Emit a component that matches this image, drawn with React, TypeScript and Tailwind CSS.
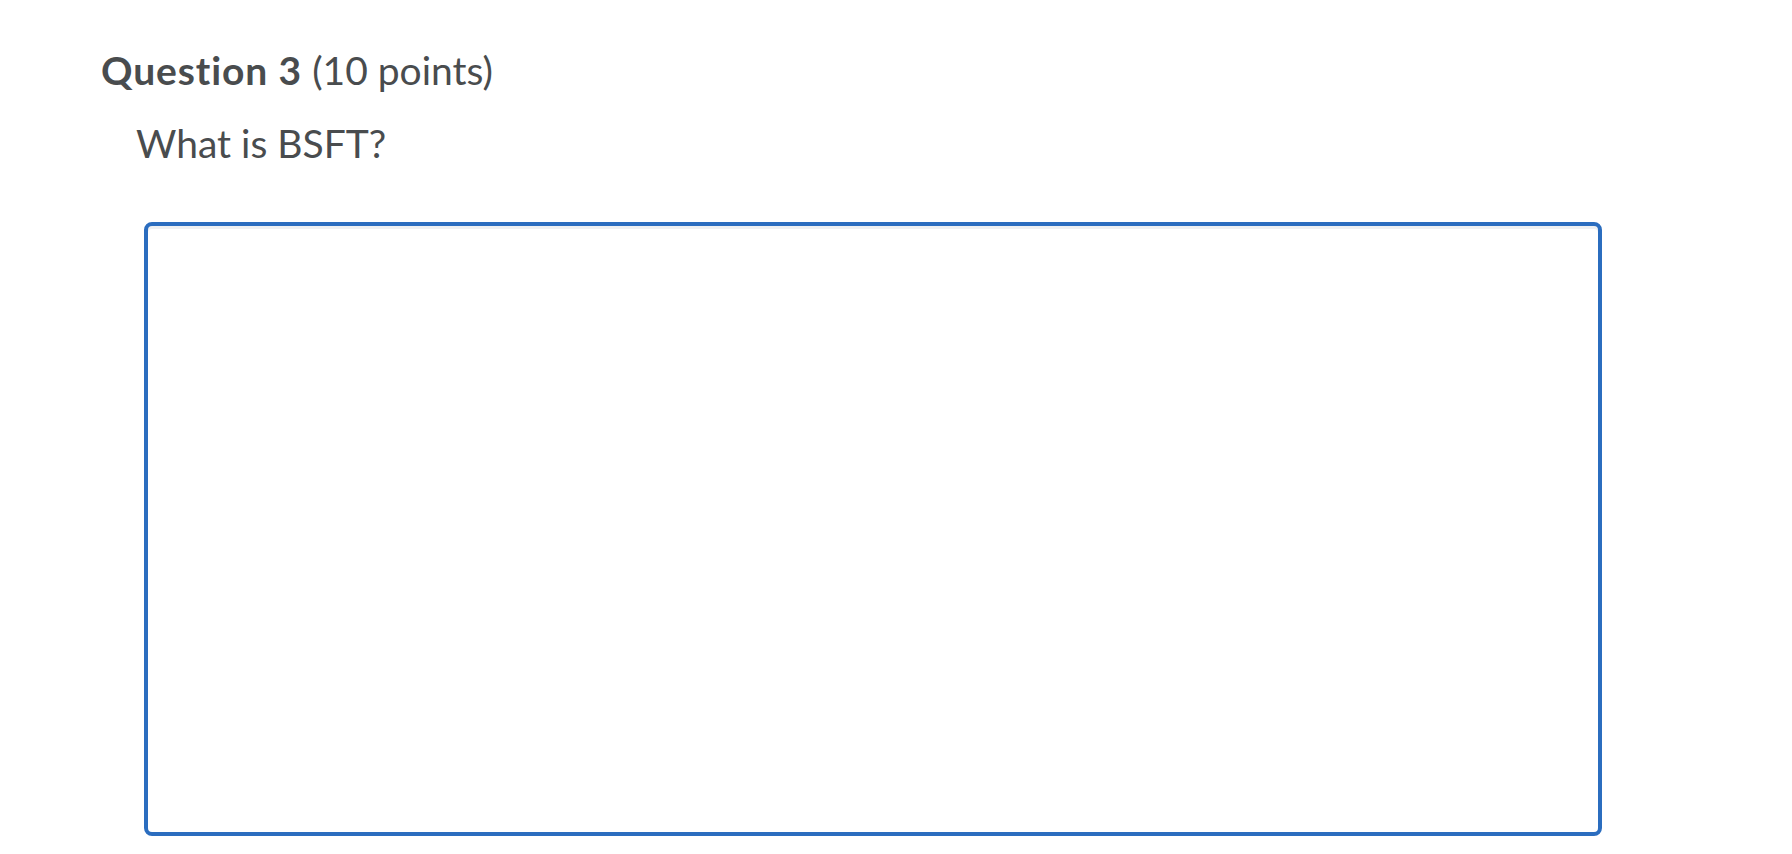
import React from "react";

export default function App() {
  return (
    <div className="min-h-[854px] w-full bg-white [font-variant-ligatures:none]" style={{ fontFamily: "Lato, 'Noto Sans', sans-serif" }}>
      <div className="pl-[101px] pt-[51px]">
        <h2 className="text-[39px] leading-none text-[#494c4e]">
          <span className="font-bold tracking-[0.9px]">Question 3</span>{" "}
          <span className="font-normal">(10 points)</span>
        </h2>
        <p className="mt-[34px] ml-[35px] text-[39px] leading-none text-[#494c4e]">What is BSFT?</p>
        <div className="mt-[59px] ml-[43px]">
          <textarea
            className="block h-[614px] w-[1458px] resize-none rounded-[8px] border-[4px] border-[#2b6dbf] bg-white shadow-[inset_0_3px_0_#eef0f2] outline-none"
            aria-label="Answer"
          />
        </div>
      </div>
    </div>
  );
}
